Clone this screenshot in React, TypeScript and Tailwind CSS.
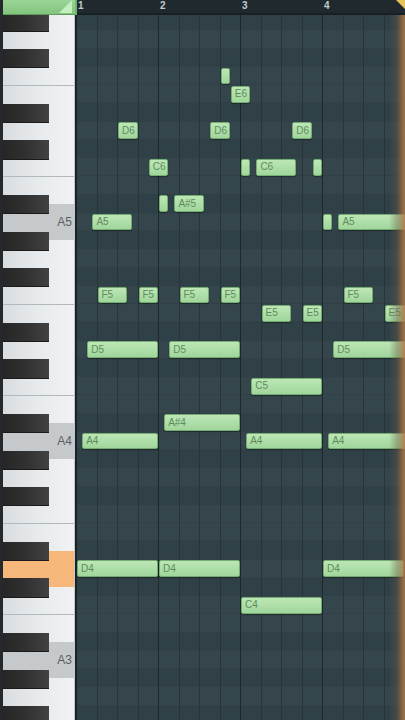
import React from "react";

const ROW = 18.25;
const STEP = 5.125;
const TOP_P = 92;
const BOTTOM_P = 52;
const OFF = -2.875;

const rowTop = (p: number) => OFF + (TOP_P - p) * ROW;
const isBlack = (p: number) => [1, 3, 6, 8, 10].includes(p % 12);
const NAMES = ["C", "C#", "D", "D#", "E", "F", "F#", "G", "G#", "A", "A#", "B"];
const noteName = (p: number) => NAMES[p % 12] + (Math.floor(p / 12) - 1);

const pitches: number[] = [];
for (let p = TOP_P; p >= BOTTOM_P; p--) pitches.push(p);

const NOTES: [number, number, number][] = [
  [89, 28, 2],
  [88, 30, 4],
  [86, 8, 4], [86, 26, 4], [86, 42, 4],
  [84, 14, 4], [84, 32, 2], [84, 35, 8], [84, 46, 2],
  [82, 16, 2], [82, 19, 6],
  [81, 3, 8], [81, 48, 2], [81, 51, 16],
  [77, 4, 6], [77, 12, 4], [77, 20, 6], [77, 28, 4], [77, 52, 6],
  [76, 36, 6], [76, 44, 4], [76, 60, 8],
  [74, 2, 14], [74, 18, 14], [74, 50, 16],
  [72, 34, 14],
  [70, 17, 15],
  [69, 1, 15], [69, 33, 15], [69, 49, 16],
  [62, 0, 16], [62, 16, 16], [62, 48, 16],
  [60, 32, 16],
];

function Keyboard() {
  const lines = pitches.filter((p) => p % 12 === 0 || p % 12 === 5);
  const labels = [81, 69, 57];
  return (
    <div className="relative h-full w-[72px] overflow-hidden bg-gradient-to-r from-[#d9dde0] via-[#e8ebed] to-[#f0f2f3]">
      {lines.map((p) => (
        <div
          key={"l" + p}
          className="absolute left-0 right-0 h-px bg-[#b3b8bc]"
          style={{ top: rowTop(p) + ROW - 0.5 }}
        />
      ))}
      {labels.map((p) => (
        <div
          key={"h" + p}
          className="absolute left-0 right-0 bg-[#c6c9cc]"
          style={{ top: rowTop(p) + ROW / 2 - ROW, height: ROW * 2 }}
        />
      ))}
      <div
        className="absolute left-0 right-0 bg-[#f6b87a]"
        style={{ top: rowTop(62) + ROW / 2 - ROW, height: ROW * 2 }}
      />
      {pitches.filter(isBlack).map((p) => (
        <div
          key={"b" + p}
          className="absolute left-0 w-[46px] bg-gradient-to-r from-[#262626] via-[#313131] to-[#424242] shadow-[0_1px_0_#1a1a1a]"
          style={{ top: rowTop(p) + 0.5, height: ROW }}
        />
      ))}
      <div className="absolute right-0 top-0 bottom-0 w-px bg-[#c4c8cb]" />
      {labels.map((p) => (
        <div
          key={"t" + p}
          className="absolute right-[3px] flex items-center text-[12px] text-[#5a5e62]"
          style={{ top: rowTop(p), height: ROW }}
        >
          {noteName(p)}
        </div>
      ))}
    </div>
  );
}

function Grid() {
  const beats = Array.from({ length: 16 }, (_, i) => i);
  return (
    <div className="relative h-full flex-1 overflow-hidden bg-[#33434a]">
      <div className="flex flex-col" style={{ marginTop: OFF }}>
        {pitches.map((p) => (
          <div
            key={p}
            className={
              "h-[18.25px] shrink-0 border-b border-[#304046] " +
              (isBlack(p) ? "bg-[#304047]" : "bg-[#35454c]")
            }
          />
        ))}
      </div>
      <div className="absolute inset-0 flex">
        {beats.map((b) => (
          <div
            key={b}
            className={
              "h-full w-[20.5px] shrink-0 border-r " +
              (b % 4 === 3 ? "border-[#1d272c]" : "border-[#28343a]")
            }
          />
        ))}
      </div>
      {NOTES.map(([p, s, l], i) => {
        const w = l * STEP - 1;
        return (
          <div
            key={i}
            className="absolute flex items-center overflow-hidden rounded-[2px] border border-[#74ad71] bg-gradient-to-b from-[#bde7b6] to-[#a0d69b] pl-[3px] text-[10px] leading-none text-[#608a60] shadow-[0_1px_1px_rgba(0,0,0,0.35)]"
            style={{ left: s * STEP, top: rowTop(p) + 0.75, width: w, height: ROW - 1.5 }}
          >
            {l >= 4 ? noteName(p) : ""}
          </div>
        );
      })}
      <div className="absolute right-0 top-0 bottom-0 w-[16px] bg-gradient-to-r from-transparent via-[#6b5a45]/40 to-[#b07a45]/90" />
    </div>
  );
}

export default function App() {
  return (
    <div
      className="flex h-[720px] w-[405px] flex-col overflow-hidden bg-[#23292d]"
      style={{ fontFamily: '"Liberation Sans", Arial, sans-serif' }}
    >
      <div className="flex h-[15px] shrink-0">
        <div className="w-[3px] bg-[#23292d]" />
        <div className="relative w-[72px] border-b border-[#5e9a5c] bg-gradient-to-b from-[#9ad596] to-[#82c47e]">
          <svg className="absolute right-[2px] top-0" width="14" height="14" viewBox="0 0 14 14">
            <polygon points="0,13 13,13 13,0" fill="#c3eebd" />
          </svg>
        </div>
        <div className="w-[2px] bg-[#6fb86c]" />
        <div className="relative flex flex-1 border-b-2 border-[#182024] bg-[#1f292e]">
          {[1, 2, 3, 4].map((n) => (
            <div
              key={n}
              className="w-[82px] shrink-0 pl-[1px] text-[10px] font-bold leading-[12px] text-[#c3cbcf]"
            >
              {n}
            </div>
          ))}
          <svg className="absolute right-0 top-0" width="9" height="9" viewBox="0 0 9 9">
            <polygon points="0,0 9,0 9,9" fill="#e7c35b" />
          </svg>
        </div>
      </div>
      <div className="flex min-h-0 flex-1">
        <div className="w-[3px] bg-[#23292d]" />
        <Keyboard />
        <div className="w-[2px] bg-[#1a2226]" />
        <Grid />
      </div>
    </div>
  );
}
